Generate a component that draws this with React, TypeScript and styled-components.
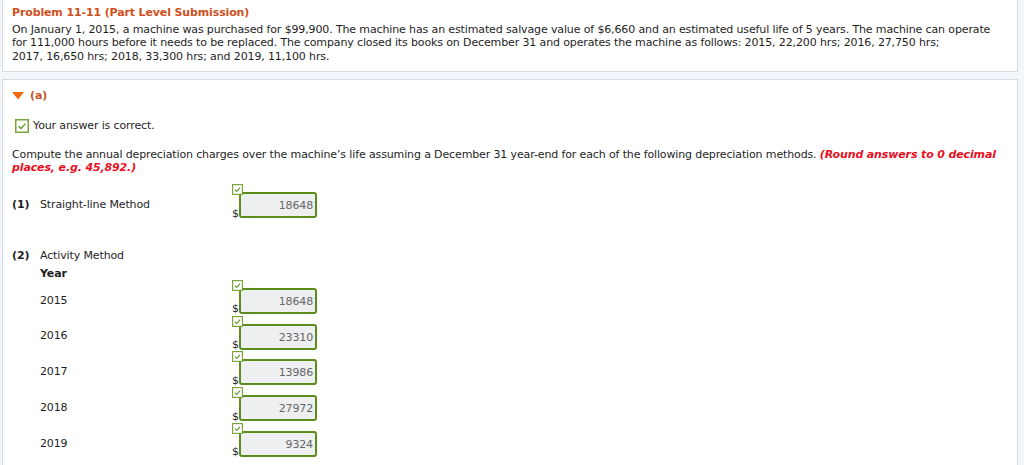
import { createGlobalStyle } from "styled-components";
import styled from "styled-components";

const GlobalStyle = createGlobalStyle`
  html, body {
    margin: 0;
    padding: 0;
    background: #f3f6fa;
  }
  body {
    font-family: "DejaVu Sans", Verdana, sans-serif;
    font-size: 11px;
    line-height: 13.5px;
    letter-spacing: -0.13px;
    color: #1e1e1e;
  }
`;

const rows = [
  { year: "2015", value: "18648" },
  { year: "2016", value: "23310" },
  { year: "2017", value: "13986" },
  { year: "2018", value: "27972" },
  { year: "2019", value: "9324" },
];

const CheckMark = ({ size }: { size: number }) => (
  <svg width={size} height={size} viewBox="0 0 14 14">
    <rect x="0.75" y="0.75" width="12.5" height="12.5" fill="#fff" stroke="#79a53a" strokeWidth="1.5" />
    <path d="M3.6 7.2 L6 9.4 L10.4 4.6" fill="none" stroke="#5e9a2a" strokeWidth="1.4" />
  </svg>
);

const AnswerInput = ({ value }: { value: string }) => (
  <AnswerCell>
    <TileBadge>
      <CheckMark size={11} />
    </TileBadge>
    <Dollar>$</Dollar>
    <InputBox>{value}</InputBox>
  </AnswerCell>
);

export default function App() {
  return (
    <>
      <GlobalStyle />
      <Page>
        <ProblemPanel>
          <Title>Problem 11-11 (Part Level Submission)</Title>
          <Paragraph>
            On January 1, 2015, a machine was purchased for $99,900. The machine has an estimated salvage value of $6,660 and an estimated useful life of 5 years. The machine can operate
            <br />
            for 111,000 hours before it needs to be replaced. The company closed its books on December 31 and operates the machine as follows: 2015, 22,200 hrs; 2016, 27,750 hrs;
            <br />
            2017, 16,650 hrs; 2018, 33,300 hrs; and 2019, 11,100 hrs.
          </Paragraph>
        </ProblemPanel>

        <PartPanel>
          <PartHeader>
            <svg width="12" height="8" viewBox="0 0 12 8">
              <polygon points="0,0 12,0 6,7.5" fill="#f26b12" />
            </svg>
            <span>(a)</span>
          </PartHeader>

          <CorrectRow>
            <CheckMark size={14} />
            <span>Your answer is correct.</span>
          </CorrectRow>

          <Instructions>
            Compute the annual depreciation charges over the machine’s life assuming a December 31 year-end for each of the following depreciation methods.{" "}
            <Hint>
              (Round answers to 0 decimal
              <br />
              places, e.g. 45,892.)
            </Hint>
          </Instructions>

          <MethodRow>
            <MethodLabel>
              <Num>(1)</Num>
              <span>Straight-line Method</span>
            </MethodLabel>
            <AnswerInput value="18648" />
          </MethodRow>

          <MethodHeading>
            <Num>(2)</Num>
            <span>Activity Method</span>
          </MethodHeading>
          <YearHeader>Year</YearHeader>

          <YearList>
            {rows.map((r) => (
              <YearRow key={r.year}>
                <YearLabel>{r.year}</YearLabel>
                <AnswerInput value={r.value} />
              </YearRow>
            ))}
          </YearList>
        </PartPanel>
      </Page>
    </>
  );
}

const Page = styled.div`
  display: flex;
  flex-direction: column;
  gap: 7px;
  padding: 0 6px 0 2px;
  height: 465px;
  box-sizing: border-box;
  overflow: hidden;
`;

const ProblemPanel = styled.section`
  background: #fff;
  border: 1px solid #d4dbe5;
  border-top: none;
  padding: 6px 9px 8px 9px;
`;

const Title = styled.div`
  color: #d0501c;
  font-weight: bold;
  margin-bottom: 3px;
`;

const Paragraph = styled.p`
  margin: 0;
  white-space: nowrap;
`;

const PartPanel = styled.section`
  flex: 1;
  background: #fff;
  border: 1px solid #d4dbe5;
  border-bottom: none;
  padding: 9px 9px 0 9px;
`;

const PartHeader = styled.div`
  display: flex;
  align-items: center;
  gap: 6px;
  color: #c8501e;
  font-weight: bold;
`;

const CorrectRow = styled.div`
  display: flex;
  align-items: center;
  gap: 4px;
  margin: 16px 0 0 3px;
`;

const Instructions = styled.p`
  margin: 15px 0 0;
  white-space: nowrap;
`;

const Hint = styled.span`
  color: #e8101e;
  font-weight: bold;
  font-style: italic;
`;

const MethodRow = styled.div`
  display: flex;
  align-items: center;
  height: 36px;
  margin-top: 12px;
`;

const MethodLabel = styled.div`
  display: flex;
  width: 227px;
`;

const Num = styled.span`
  font-weight: bold;
  width: 28px;
`;

const MethodHeading = styled.div`
  display: flex;
  margin-top: 26px;
`;

const YearHeader = styled.div`
  font-weight: bold;
  padding-left: 28px;
  margin-top: 5px;
`;

const YearList = styled.div`
  display: flex;
  flex-direction: column;
  margin-top: 2px;
`;

const YearRow = styled.div`
  display: flex;
  align-items: center;
  height: 35.75px;
`;

const YearLabel = styled.span`
  width: 227px;
  padding-left: 28px;
  box-sizing: border-box;
`;

const AnswerCell = styled.div`
  position: relative;
  margin-top: 1px;
`;

const TileBadge = styled.div`
  position: absolute;
  left: -7px;
  top: -8px;
  line-height: 0;
  z-index: 1;
`;

const Dollar = styled.span`
  position: absolute;
  left: -7px;
  bottom: -2px;
  font-size: 11px;
  color: #222;
`;

const InputBox = styled.div`
  box-sizing: border-box;
  width: 78px;
  height: 26px;
  border: 2px solid #5b8c1c;
  border-radius: 3px;
  background: #eeeff1;
  color: #666;
  text-align: right;
  padding: 5px 2px 0 0;
`;
